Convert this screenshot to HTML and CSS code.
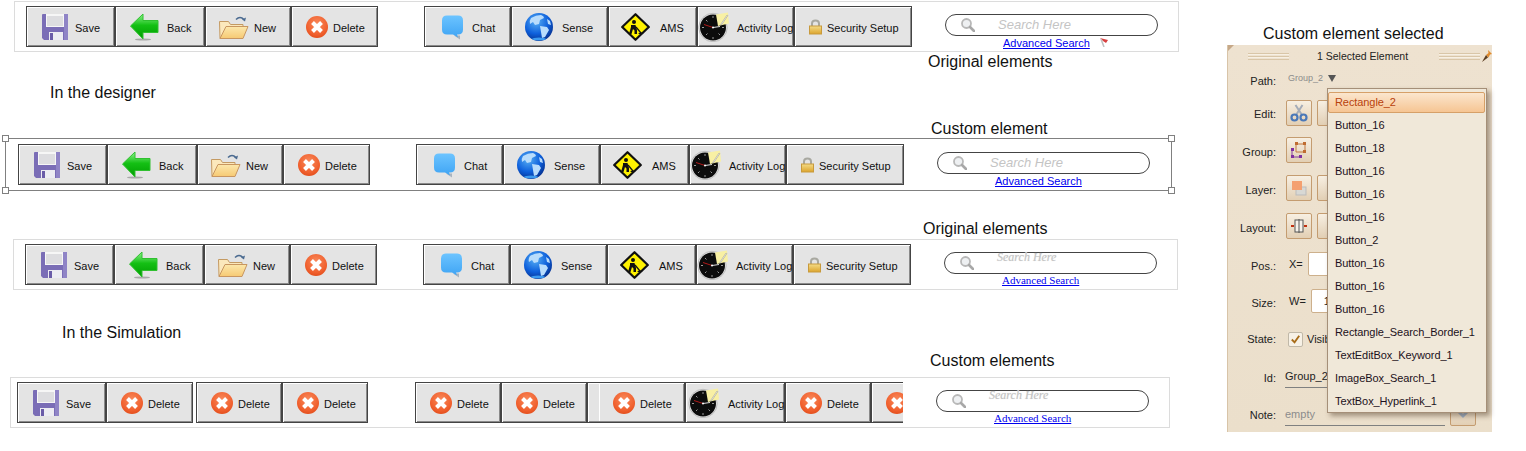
FILE: index.html
```html
<!DOCTYPE html>
<html lang="en">
<head>
<meta charset="utf-8">
<title>Custom elements</title>
<link rel="stylesheet" href="styles.css">
</head>
<body>
<svg class="defs" aria-hidden="true">
  <defs>
    <linearGradient id="gGreen" x1="0" y1="0" x2="0" y2="1"><stop offset="0" stop-color="#8cf28c"/><stop offset=".45" stop-color="#14c014"/><stop offset="1" stop-color="#009c00"/></linearGradient>
    <linearGradient id="gFold" x1="0" y1="0" x2="0" y2="1"><stop offset="0" stop-color="#fce8ac"/><stop offset="1" stop-color="#f6c973"/></linearGradient>
    <radialGradient id="gDel" cx=".5" cy=".35" r=".7"><stop offset="0" stop-color="#f98a5c"/><stop offset=".7" stop-color="#f0602e"/><stop offset="1" stop-color="#e04a18"/></radialGradient>
    <linearGradient id="gChat" x1="0" y1="0" x2="0" y2="1"><stop offset="0" stop-color="#6cc4ff"/><stop offset="1" stop-color="#3fa4f4"/></linearGradient>
    <radialGradient id="gGlobe" cx=".4" cy=".3" r=".8"><stop offset="0" stop-color="#58b0f4"/><stop offset=".55" stop-color="#0e60dc"/><stop offset="1" stop-color="#04257c"/></radialGradient>
    <linearGradient id="gLock" x1="0" y1="0" x2="0" y2="1"><stop offset="0" stop-color="#f4dc88"/><stop offset="1" stop-color="#dca42c"/></linearGradient>

    <symbol id="i-save" viewBox="0 0 26 26">
      <path d="M0 1q0-1 1-1h24l1 1v25H2l-2-2z" fill="#7a6db6"/>
      <path d="M22 0h4v26h-4z" fill="#8f84c6"/>
      <rect x="4" y="0" width="18" height="13" fill="#f6f6f6"/>
      <path d="M5 3h16M5 5h16M5 7h16M5 9h16M5 11h16" stroke="#c4c4ca" stroke-width="1"/>
      <rect x="7" y="18" width="14" height="8" fill="#ecECf2"/>
      <rect x="8" y="19" width="3" height="7" fill="#6a5ca8"/>
    </symbol>
    <symbol id="i-back" viewBox="0 0 29 27">
      <ellipse cx="13" cy="26" rx="8" ry="1" fill="#a8a8a8"/>
      <path d="M.5 12.5 13 .5v6.500h15v12H13v6.500z" fill="url(#gGreen)" stroke="#30c030"/>
    </symbol>
    <symbol id="i-new" viewBox="0 0 30 25">
      <path d="M17 5q4-4 8 0" fill="none" stroke="#4a6a90" stroke-width="1.500"/>
      <path d="m27 3-1 4-3-2z" fill="#4a6a90"/>
      <path d="M1 24 .5 7h9l2 3H24v4z" fill="#fbe8bc" stroke="#c49a62"/>
      <path d="M1 24 7 12h22l-5 12z" fill="url(#gFold)" stroke="#c89660"/>
    </symbol>
    <symbol id="i-del" viewBox="0 0 22 23">
      <circle cx="11" cy="11.500" r="11" fill="url(#gDel)"/>
      <path d="m6.500 7 9 9M15.500 7l-9 9" stroke="#fff" stroke-width="4"/>
    </symbol>
    <symbol id="i-chat" viewBox="0 0 23 25">
      <path d="M13 21h6v4z" fill="#a8b4c0"/>
      <path d="M6 1h11q5 0 5 5v9q0 5-5 5h-1l1 3-5-3H6q-5 0-5-5V6q0-5 5-5z" fill="url(#gChat)"/>
    </symbol>
    <symbol id="i-globe" viewBox="0 0 28 28">
      <circle cx="14" cy="14" r="14" fill="url(#gGlobe)"/>
      <path d="M6 5q5-3 10-3 3 1 3 3l-4 2-1 4-4 1-2-3-3 2q-1-3 1-6zM15 13l7 1 2 3-4 7-3 1-1-6zM22 6l3 2 1 4-3-1z" fill="#b8dcfc"/>
      <ellipse cx="14" cy="26" rx="7" ry="1.500" fill="#3c9af0"/>
    </symbol>
    <symbol id="i-ams" viewBox="0 0 29 28">
      <path d="M14.500 1.200 27.800 14 14.500 26.800 1.200 14z" fill="#fff200" stroke="#111" stroke-width="2.200" stroke-linejoin="round"/>
      <circle cx="13" cy="9" r="2" fill="#111"/>
      <path d="M10 12h4.500l1.500 5v4h-2.500v-3.500L12 16l-1.500 5H8l2-7z" fill="#111"/>
      <path d="m15 14 5 6" stroke="#111" stroke-width="1.200"/>
      <path d="M17 21q3-3.500 5.500 0z" fill="#111"/>
    </symbol>
    <symbol id="i-log" viewBox="0 0 33 30">
      <circle cx="15" cy="15.500" r="14.200" fill="#e8e8e8" stroke="#bcbcbc"/>
      <circle cx="15" cy="15.500" r="13" fill="#0c0c0c"/>
      <path d="M15 4v2M26 15.500h-2M15 27v-2M4 15.500h2M8 8l1.500 1.500M8 23l1.500-1.500M22 23l-1.500-1.500" stroke="#999" stroke-width="1"/>
      <path d="m15 15.500-9-3" stroke="#b01818" stroke-width="1"/>
      <path d="m15 15.500 7-1" stroke="#ddd" stroke-width="1"/>
      <circle cx="15" cy="15.500" r="1" fill="#fff"/>
      <path d="M18 2.500 30 .5l1 11-11 2.500z" fill="#f8f0a4"/>
      <path d="m23 12 6-9 .8.6-6 9-1.300.7z" fill="#fbfbfb" stroke="#777" stroke-width=".4"/>
    </symbol>
    <symbol id="i-lock" viewBox="0 0 13 15">
      <path d="M3 7V4q0-3 3.500-3T10 4v3" fill="none" stroke="#a8a8a0" stroke-width="2"/>
      <rect x=".5" y="6.500" width="12" height="8" fill="url(#gLock)" stroke="#c89a3c"/>
    </symbol>
    <symbol id="i-search" viewBox="0 0 14 14">
      <circle cx="5.500" cy="5.500" r="4.500" fill="#eef0f2" stroke="#b8b8b8" stroke-width="1.800"/>
      <path d="m9 9 4 4" stroke="#a8a8a8" stroke-width="2.600" stroke-linecap="round"/>
    </symbol>
  </defs>
</svg>

<main class="canvas">
  <section class="left">
    <div class="bar bar-a">
      <div class="group">
        <div class="btn btn-save"><svg class="ico w26"><use href="#i-save"/></svg><span>Save</span></div>
        <div class="btn btn-back"><svg class="ico w29"><use href="#i-back"/></svg><span>Back</span></div>
        <div class="btn btn-new"><svg class="ico w30"><use href="#i-new"/></svg><span>New</span></div>
        <div class="btn btn-del"><svg class="ico w22"><use href="#i-del"/></svg><span>Delete</span></div>
      </div>
      <div class="group">
        <div class="btn btn-chat"><svg class="ico w23"><use href="#i-chat"/></svg><span>Chat</span></div>
        <div class="btn btn-sense"><svg class="ico w28"><use href="#i-globe"/></svg><span>Sense</span></div>
        <div class="btn btn-ams"><svg class="ico w29"><use href="#i-ams"/></svg><span>AMS</span></div>
        <div class="btn btn-log"><svg class="ico w33"><use href="#i-log"/></svg><span>Activity Log</span></div>
        <div class="btn btn-sec"><svg class="ico w13"><use href="#i-lock"/></svg><span>Security Setup</span></div>
      </div>
      <div class="finder">
        <div class="pill"><svg class="lens"><use href="#i-search"/></svg><span class="hint">Search Here</span></div>
        <div class="link-row"><a class="adv" href="#">Advanced Search</a>
          <svg class="flag" viewBox="0 0 8 9"><path d="M0 0 8 2 6 5 3 3z" fill="#d84040"/><path d="m1 1 3 8" stroke="#c0c0c0" stroke-width="1.500"/></svg>
        </div>
      </div>
    </div>
    <p class="note note-orig1">Original elements</p>
    <p class="note note-design">In the designer</p>
    <p class="note note-custom">Custom element</p>

    <div class="bar bar-b">
      <i class="handle tl"></i><i class="handle tr"></i><i class="handle bl"></i><i class="handle br"></i>
      <div class="group">
        <div class="btn btn-save"><svg class="ico w26"><use href="#i-save"/></svg><span>Save</span></div>
        <div class="btn btn-back"><svg class="ico w29"><use href="#i-back"/></svg><span>Back</span></div>
        <div class="btn btn-new"><svg class="ico w30"><use href="#i-new"/></svg><span>New</span></div>
        <div class="btn btn-del"><svg class="ico w22"><use href="#i-del"/></svg><span>Delete</span></div>
      </div>
      <div class="group">
        <div class="btn btn-chat"><svg class="ico w23"><use href="#i-chat"/></svg><span>Chat</span></div>
        <div class="btn btn-sense"><svg class="ico w28"><use href="#i-globe"/></svg><span>Sense</span></div>
        <div class="btn btn-ams"><svg class="ico w29"><use href="#i-ams"/></svg><span>AMS</span></div>
        <div class="btn btn-log"><svg class="ico w33"><use href="#i-log"/></svg><span>Activity Log</span></div>
        <div class="btn btn-sec"><svg class="ico w13"><use href="#i-lock"/></svg><span>Security Setup</span></div>
      </div>
      <div class="finder">
        <div class="pill"><svg class="lens"><use href="#i-search"/></svg><span class="hint">Search Here</span></div>
        <div class="link-row"><a class="adv" href="#">Advanced Search</a></div>
      </div>
    </div>

    <p class="note note-orig2">Original elements</p>

    <div class="bar bar-c">
      <div class="group">
        <div class="btn btn-save"><svg class="ico w26"><use href="#i-save"/></svg><span>Save</span></div>
        <div class="btn btn-back"><svg class="ico w29"><use href="#i-back"/></svg><span>Back</span></div>
        <div class="btn btn-new"><svg class="ico w30"><use href="#i-new"/></svg><span>New</span></div>
        <div class="btn btn-del"><svg class="ico w22"><use href="#i-del"/></svg><span>Delete</span></div>
      </div>
      <div class="group">
        <div class="btn btn-chat"><svg class="ico w23"><use href="#i-chat"/></svg><span>Chat</span></div>
        <div class="btn btn-sense"><svg class="ico w28"><use href="#i-globe"/></svg><span>Sense</span></div>
        <div class="btn btn-ams"><svg class="ico w29"><use href="#i-ams"/></svg><span>AMS</span></div>
        <div class="btn btn-log"><svg class="ico w33"><use href="#i-log"/></svg><span>Activity Log</span></div>
        <div class="btn btn-sec"><svg class="ico w13"><use href="#i-lock"/></svg><span>Security Setup</span></div>
      </div>
      <div class="finder sim">
        <div class="pill"><svg class="lens"><use href="#i-search"/></svg><span class="hint">Search Here</span></div>
        <div class="link-row"><a class="adv" href="#">Advanced Search</a></div>
      </div>
    </div>

    <p class="note note-sim">In the Simulation</p>
    <p class="note note-customs">Custom elements</p>

    <div class="bar bar-d">
      <div class="group">
        <div class="btn btn-save"><svg class="ico w26"><use href="#i-save"/></svg><span>Save</span></div>
        <div class="btn btn-del"><svg class="ico w22"><use href="#i-del"/></svg><span>Delete</span></div>
        <div class="btn btn-del s86 after-gap"><svg class="ico w22"><use href="#i-del"/></svg><span>Delete</span></div>
        <div class="btn btn-del s86"><svg class="ico w22"><use href="#i-del"/></svg><span>Delete</span></div>
      </div>
      <div class="group clipped">
        <div class="btn btn-del s86"><svg class="ico w22"><use href="#i-del"/></svg><span>Delete</span></div>
        <div class="btn btn-del s86"><svg class="ico w22"><use href="#i-del"/></svg><span>Delete</span></div>
        <div class="btn btn-del s98"><svg class="ico w22"><use href="#i-del"/></svg><span>Delete</span></div>
        <div class="btn btn-log"><svg class="ico w33"><use href="#i-log"/></svg><span>Activity Log</span></div>
        <div class="btn btn-del s86"><svg class="ico w22"><use href="#i-del"/></svg><span>Delete</span></div>
        <div class="btn btn-del s86"><svg class="ico w22"><use href="#i-del"/></svg><span>Delete</span></div>
      </div>
      <div class="finder sim">
        <div class="pill"><svg class="lens"><use href="#i-search"/></svg><span class="hint">Search Here</span></div>
        <div class="link-row"><a class="adv" href="#">Advanced Search</a></div>
      </div>
    </div>
  </section>

  <section class="right">
    <h2 class="title">Custom element selected</h2>
    <div class="panel">
      <div class="head">
        <i class="grip"></i><span class="head-text">1 Selected Element</span><i class="grip"></i>
        <svg class="pin" viewBox="0 0 10 12"><path d="m6 0 4 4-2 .5-1.500 3-2.500-2.500 2.500-2z" fill="#e08a2c"/><path d="m4 5 2 2.500L0 12z" fill="#5a3c20"/></svg>
      </div>
      <label class="lab lab-path">Path:</label>
      <div class="cell path"><span>Group_2</span><svg class="caret" viewBox="0 0 8 7"><path d="M0 0h8L4 7z" fill="#555"/></svg></div>
      <label class="lab">Edit:</label>
      <div class="cell raised">
        <span class="tool"><svg viewBox="0 0 18 18"><path d="M12.500 1 6 11M5.500 1 12 11" stroke="#a4acb8" stroke-width="2"/><circle cx="4.500" cy="13.500" r="3" fill="none" stroke="#4a78b8" stroke-width="2.200"/><circle cx="13.500" cy="13.500" r="3" fill="none" stroke="#4a78b8" stroke-width="2.200"/></svg></span>
        <span class="tool"></span>
      </div>
      <label class="lab">Group:</label>
      <div class="cell raised">
        <span class="tool"><svg viewBox="0 0 18 18"><path d="M6 3h9v8H6z" fill="none" stroke="#c07840" stroke-width="1"/><path d="M2 8v8h8" fill="none" stroke="#8040a0" stroke-width="1"/><path d="M1 7h3v3H1zM1 14h3v3H1zM9 14h3v3H9z" fill="#8030a0"/><path d="M5 1h3v3H5zM13 1h3v3h-3zM13 9h3v3h-3z" fill="#c06c30"/></svg></span>
      </div>
      <label class="lab">Layer:</label>
      <div class="cell raised">
        <span class="tool"><svg viewBox="0 0 18 18"><rect x="6" y="8" width="10" height="8" fill="#d8d8d4" stroke="#bbb"/><rect x="2" y="2" width="10" height="9" fill="#f4a070"/></svg></span>
        <span class="tool"></span>
      </div>
      <label class="lab">Layout:</label>
      <div class="cell raised">
        <span class="tool"><svg viewBox="0 0 18 18"><rect x="5" y="3" width="8" height="12" fill="#f6f2ea" stroke="#555"/><path d="M9 2v14" stroke="#555"/><path d="M1 9h3M14 9h3" stroke="#c03010" stroke-width="2"/></svg></span>
        <span class="tool"></span>
      </div>
      <label class="lab">Pos.:</label>
      <div class="cell raised"><span class="eq">X=</span><span class="box"></span></div>
      <label class="lab">Size:</label>
      <div class="cell raised"><span class="eq">W=</span><span class="box">1</span></div>
      <label class="lab">State:</label>
      <div class="cell state"><span class="check"><svg viewBox="0 0 14 14"><path d="m3 7 3 3 5-7" fill="none" stroke="#a86c18" stroke-width="2"/></svg></span><span class="vis">Visible</span></div>
      <label class="lab">Id:</label>
      <div class="cell"><span class="field field-id">Group_2</span></div>
      <label class="lab">Note:</label>
      <div class="cell"><span class="field empty">empty</span><span class="tool tool-note"><svg viewBox="0 0 18 18"><path d="m3 6 6 6 6-6" fill="none" stroke="#9cb0c8" stroke-width="3"/></svg></span></div>

      <ul class="menu">
        <li class="on">Rectangle_2</li>
        <li>Button_16</li>
        <li>Button_18</li>
        <li>Button_16</li>
        <li>Button_16</li>
        <li>Button_16</li>
        <li>Button_2</li>
        <li>Button_16</li>
        <li>Button_16</li>
        <li>Button_16</li>
        <li>Rectangle_Search_Border_1</li>
        <li>TextEditBox_Keyword_1</li>
        <li>ImageBox_Search_1</li>
        <li>TextBox_Hyperlink_1</li>
      </ul>
    </div>
  </section>
</main>
</body>
</html>
```
FILE: styles.css
```css
* { box-sizing: border-box; }
html, body { margin: 0; padding: 0; background: #fff; overflow: hidden; }
body { font-family: "Liberation Sans", Arial, sans-serif; color: #111; }
.defs { position: absolute; width: 0; height: 0; }
.canvas { display: flex; width: 1526px; height: 451px; }
.left { width: 1227px; flex: none; }

/* captions */
.note { margin: 0; height: 18px; line-height: 20px; font-size: 16px; color: #111; white-space: nowrap; }
.note-orig1 { margin-left: 928px; }
.note-design { margin: 13px 0 0 50px; }
.note-custom { margin: 18px 0 0 931px; }
.note-orig2 { margin: 28px 0 0 923px; }
.note-sim { margin: 33px 0 0 62px; }
.note-customs { margin: 10px 0 0 930px; }

/* toolbars */
.bar { display: flex; align-items: flex-start; height: 51px; padding: 4px 0 0 11px; border: 1px solid #dcdcdc; }
.bar-a { width: 1165px; margin: 1px 0 0 14px; }
.bar-b { position: relative; width: 1167px; height: 53px; margin: 1px 0 0 5px; padding: 5px 0 0 12px; border-color: #808080; }
.bar-c { width: 1165px; margin: 2px 0 0 13px; }
.bar-d { width: 1160px; margin: 8px 0 0 10px; padding-left: 6px; }
.group { display: flex; height: 41px; }
.group + .group { margin-left: 46px; }
.bar-d .group + .group { margin-left: 47px; }
.clipped { width: 488px; overflow: hidden; flex: none; }

.handle { position: absolute; width: 7px; height: 7px; background: #fff; border: 1px solid #808080; }
.tl { left: -4px; top: -4px; }
.tr { right: -4px; top: -4px; }
.bl { left: -4px; bottom: -4px; }
.br { right: -4px; bottom: -4px; }

.btn { display: flex; align-items: center; flex: none; height: 41px; overflow: hidden; font-size: 11px; white-space: nowrap; background: #e4e4e4; border: 1px solid #444; box-shadow: inset 1px 1px 0 #fff, inset -1px -1px 0 #8a8a8a; }
.btn span { margin-top: 2px; }
.ico { flex: none; height: 30px; }
.w13 { width: 13px; }
.w22 { width: 22px; }
.w23 { width: 23px; }
.w26 { width: 26px; }
.w28 { width: 28px; }
.w29 { width: 29px; }
.w30 { width: 30px; }
.w33 { width: 33px; }
.btn-save { width: 89px; padding-left: 15px; gap: 7px; }
.btn-back { width: 90px; padding-left: 14px; gap: 8px; }
.btn-new { width: 86px; padding-left: 13px; gap: 5px; }
.btn-del { width: 87px; padding-left: 14px; gap: 5px; }
.btn-chat { width: 87px; padding-left: 16px; gap: 8px; }
.btn-sense { width: 97px; padding-left: 13px; gap: 9px; }
.btn-ams { width: 89px; padding-left: 12px; gap: 10px; }
.btn-log { width: 97px; padding-left: 0; gap: 6px; }
.btn-sec { width: 118px; padding-left: 14px; gap: 5px; }
.bar-d .btn-log { width: 100px; padding-left: 2px; gap: 7px; }
.s86 { width: 86px; }
.s98 { width: 98px; padding-left: 25px; background: linear-gradient(90deg, #e4e4e4 11px, #fff 11px, #fff 12px, #e4e4e4 12px); }
.after-gap { margin-left: 3px; }

/* search */
.finder { flex: none; width: 213px; margin: 8px 0 0 33px; }
.pill { position: relative; display: flex; align-items: center; height: 22px; padding-left: 15px; border: 1px solid #444; border-radius: 11px; background: #fff; }
.lens { width: 14px; height: 14px; }
.hint { margin: -2px 0 0 23px; font-size: 13px; font-style: italic; color: #c4c4c4; }
.link-row { display: flex; align-items: flex-start; height: 13px; margin: 1px 0 0 58px; }
.adv { font-size: 11px; line-height: 13px; color: #0000ee; text-decoration: underline; }
.flag { width: 8px; height: 9px; margin: 1px 0 0 10px; }
.sim .hint { margin: -12px 0 0 23px; font-family: "Liberation Serif", "Times New Roman", serif; font-size: 12px; text-shadow: 0 0 1px #ddd; }
.sim .link-row { margin-top: 0; }
.sim .adv { font-family: "Liberation Serif", "Times New Roman", serif; }

/* inspector panel */
.right { width: 265px; padding-top: 24px; }
.title { margin: 0 0 3px 36px; height: 18px; line-height: 20px; font-size: 16px; font-weight: 400; white-space: nowrap; }
.panel { position: relative; display: grid; grid-template-columns: 48px 1fr; grid-template-rows: 19px 32px 37px 38px 38px 38px 38px 36px 37px 40px 34px; column-gap: 10px; width: 265px; height: 387px; font-size: 11px; color: #222; background: linear-gradient(#eee2d0, #ebdfcb); border-left: 1px solid #d8c4a8; }
.panel::before { content: ""; position: absolute; left: 0; top: 0; width: 6px; height: 6px; background: #c6a888; clip-path: polygon(0 0, 100% 0, 0 100%); }
.head { grid-column: 1 / 3; display: flex; align-items: center; padding: 3px 0 0 20px; }
.head-text { margin: 0 31px 0 28px; font-size: 10.5px; white-space: nowrap; }
.grip { flex: none; width: 41px; height: 7px; background: repeating-linear-gradient(#d9c6a8 0 1px, #f7f0e4 1px 2px, #eee2d0 2px 3px); }
.pin { position: absolute; right: 0; top: 5px; width: 10px; height: 12px; }
.lab { align-self: center; justify-self: end; font-size: 11px; line-height: 13px; }
.lab-path { margin-top: 2px; }
.cell { display: flex; align-items: center; min-width: 0; gap: 5px; }
.raised { padding-bottom: 4px; }
.state { padding-bottom: 1px; }
.path { gap: 5px; padding-bottom: 4px; font-size: 9px; color: #8c8c8c; }
.path span { margin-left: 2px; }
.caret { width: 8px; height: 7px; }
.tool { display: flex; align-items: center; justify-content: center; width: 26px; height: 26px; flex: none; border: 1px solid #c49c70; border-radius: 2px; background: linear-gradient(#f7efe2, #e2cfb4); }
.tool svg { width: 18px; height: 18px; }
.tool-note { margin-bottom: 4px; }
.eq { margin-left: 3px; font-size: 11px; }
.box { flex: none; height: 24px; width: 60px; padding: 5px 0 0 12px; background: #fff; border: 1px solid #cdb08c; border-radius: 2px; }
.check { flex: none; width: 15px; height: 15px; margin-left: 2px; background: #f7f1e6; border: 1px solid #c0b8a8; border-radius: 2px; }
.check svg { display: block; width: 13px; height: 13px; }
.vis { margin-left: -1px; font-size: 11px; }
.field { flex: none; width: 160px; height: 22px; margin-left: -1px; line-height: 20px; border-bottom: 1px solid #7f8080; }
.field-id { margin-bottom: 2px; }
.empty { color: #8c8c8c; }

.menu { position: absolute; left: 99px; top: 43px; width: 160px; height: 325px; margin: 0; padding: 3px 0; list-style: none; font-size: 11px; letter-spacing: -.08px; color: #1c1020; background: #f0e8d9; border: 1px solid #a58f78; box-shadow: 3px 3px 5px rgba(70, 50, 30, .45); }
.menu li { height: 21px; margin: 0 1px 2px 0; padding-left: 7px; line-height: 21px; white-space: nowrap; }
.menu .on { padding-left: 6px; color: #b8420c; line-height: 19px; background: linear-gradient(#fbe6ce, #f6c593); border: 1px solid #d6a068; border-radius: 2px; }
```
